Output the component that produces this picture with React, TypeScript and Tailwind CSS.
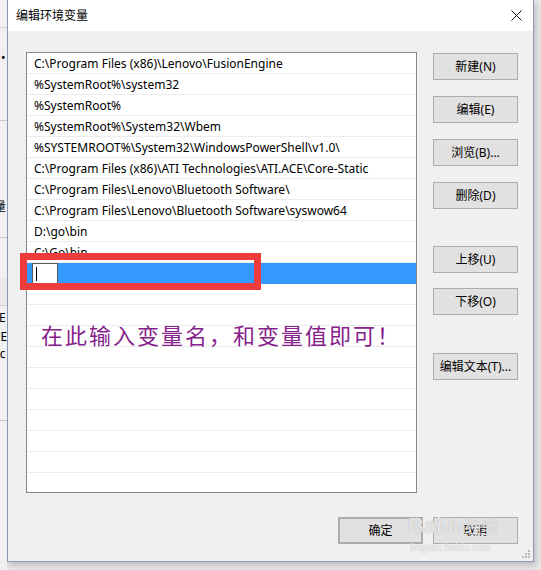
import React from "react";

// ------------------------
// Data
// ------------------------
const paths = [
  "C:\\Program Files (x86)\\Lenovo\\FusionEngine",
  "%SystemRoot%\\system32",
  "%SystemRoot%",
  "%SystemRoot%\\System32\\Wbem",
  "%SYSTEMROOT%\\System32\\WindowsPowerShell\\v1.0\\",
  "C:\\Program Files (x86)\\ATI Technologies\\ATI.ACE\\Core-Static",
  "C:\\Program Files\\Lenovo\\Bluetooth Software\\",
  "C:\\Program Files\\Lenovo\\Bluetooth Software\\syswow64",
  "D:\\go\\bin",
  "C:\\Go\\bin",
];

const emptyRows = Array.from({ length: 10 });

const ui = "font-['Segoe_UI','Noto_Sans','Noto_Sans_CJK_SC',sans-serif]";

function WinButton({ label, className = "" }: { label: string; className?: string }) {
  return (
    <button
      className={`h-[27px] w-[85px] border border-[#adadad] bg-[#e1e1e1] text-[12px] text-black ${ui} ${className}`}
    >
      {label}
    </button>
  );
}

export default function App() {
  return (
    <div className="relative flex h-[570px] w-[541px] overflow-hidden bg-[#e6e6e6]">
      {/* window behind the dialog */}
      <div className={`relative h-full w-[7px] overflow-hidden bg-[#f0f0f0] text-[12px] text-black ${ui}`}>
        <div className="h-[28px] border-b border-[#d9d9d9]" />
        <div className="mt-[24px] pl-[1px] leading-none">•</div>
        <div className="mt-[56px] border-b border-[#c8c8c8]" />
        <div className="mt-[80px] -ml-[6px] leading-none">量(</div>
        <div className="mt-[12px] border-b border-[#c8c8c8]" />
        <div className="mt-[40px] h-[28px] border-b border-[#d0d0d0] bg-[#e8e8e8]" />
        <div className="mt-[2px] -ml-[1px] leading-[19px]">E</div>
        <div className="-ml-[7px] leading-[19px]">CE</div>
        <div className="-ml-[5px] leading-[16px]">rc</div>
        <div className="mt-[58px] border-b border-[#c8c8c8]" />
      </div>

      {/* Dialog */}
      <div className="flex h-[562px] w-[527px] flex-col border-x border-b border-[#8a98b8] bg-[#f0f0f0] shadow-[2px_3px_6px_rgba(0,0,0,0.18)]">
        {/* Title bar */}
        <div className={`flex h-[31px] items-center justify-between bg-white pl-[8px] pr-[11px] text-[12px] text-black ${ui}`}>
          <span>编辑环境变量</span>
          <svg width="11" height="11" viewBox="0 0 11 11">
            <path d="M0.5 0.5 L10.5 10.5 M10.5 0.5 L0.5 10.5" stroke="#111" strokeWidth="1" />
          </svg>
        </div>

        {/* Body */}
        <div className="relative flex flex-1 flex-col pl-[18px] pt-[21px]">
          <div className="flex">
            {/* List */}
            <div className={`h-[441px] w-[391px] overflow-hidden border border-[#828790] bg-white text-[12px] text-black ${ui}`}>
              {paths.map((p) => (
                <div key={p} className="flex h-[21px] items-center border-b border-[#ececec] pl-[7px] pt-[2px] whitespace-nowrap">
                  {p}
                </div>
              ))}
              <div className="flex h-[21px] items-center bg-[#3399ff] pl-[5px]">
                <div className="flex h-[21px] w-[26px] items-center border border-[#5a5a5a] bg-white pl-[3px]">
                  <div className="h-[14px] w-px bg-black" />
                </div>
              </div>
              {emptyRows.map((_, i) => (
                <div key={i} className="h-[21px] border-b border-[#ececec]" />
              ))}
            </div>

            {/* Side buttons */}
            <div className="ml-[16px] flex flex-col">
              <WinButton label="新建(N)" className="mt-[1px]" />
              <WinButton label="编辑(E)" className="mt-[16px]" />
              <WinButton label="浏览(B)..." className="mt-[16px]" />
              <WinButton label="删除(D)" className="mt-[16px]" />
              <WinButton label="上移(U)" className="mt-[37px]" />
              <WinButton label="下移(O)" className="mt-[15px]" />
              <WinButton label="编辑文本(T)..." className="mt-[38px]" />
            </div>
          </div>

          {/* Footer buttons */}
          <div className="mt-[24px] flex justify-end gap-[10px] pr-[15px]">
            <WinButton label="确定" className="border-2 border-[#0078d7]" />
            <WinButton label="取消" />
          </div>

          {/* watermark */}
          <div className="pointer-events-none absolute left-[400px] top-[484px] font-['Liberation_Sans','Noto_Sans_CJK_SC',sans-serif] text-[22px] font-bold leading-none text-white/70 [text-shadow:0_0_1px_#a0a0a0]">
            Bai<span className="text-[18px]">du</span>
            <span className="text-[17px] font-normal">经验</span>
          </div>
          <div className="pointer-events-none absolute left-[402px] top-[512px] font-['Liberation_Sans',sans-serif] text-[10px] leading-none text-white/70 [text-shadow:0_0_1px_#b0b0b0]">
            jingyan.baidu.com
          </div>

          {/* resize grip */}
          <svg className="absolute bottom-[3px] right-[3px]" width="8" height="8" viewBox="0 0 8 8">
            <rect x="6" y="0" width="2" height="2" fill="#b8b8b8" />
            <rect x="3" y="3" width="2" height="2" fill="#b8b8b8" />
            <rect x="6" y="3" width="2" height="2" fill="#b8b8b8" />
            <rect x="0" y="6" width="2" height="2" fill="#b8b8b8" />
            <rect x="3" y="6" width="2" height="2" fill="#b8b8b8" />
            <rect x="6" y="6" width="2" height="2" fill="#b8b8b8" />
          </svg>
        </div>
      </div>

      {/* annotation: red box */}
      <div className="pointer-events-none absolute left-[20px] top-[253px] h-[37px] w-[241px] border-[7px] border-[#ee3b3b]" />

      {/* annotation: purple hint */}
      <div className="pointer-events-none absolute left-[41px] top-[319px] font-['Noto_Sans_CJK_SC',sans-serif] text-[22px] leading-[30px] tracking-[2px] text-[#86218c]">
        在此输入变量名，和变量值即可！
      </div>
    </div>
  );
}
